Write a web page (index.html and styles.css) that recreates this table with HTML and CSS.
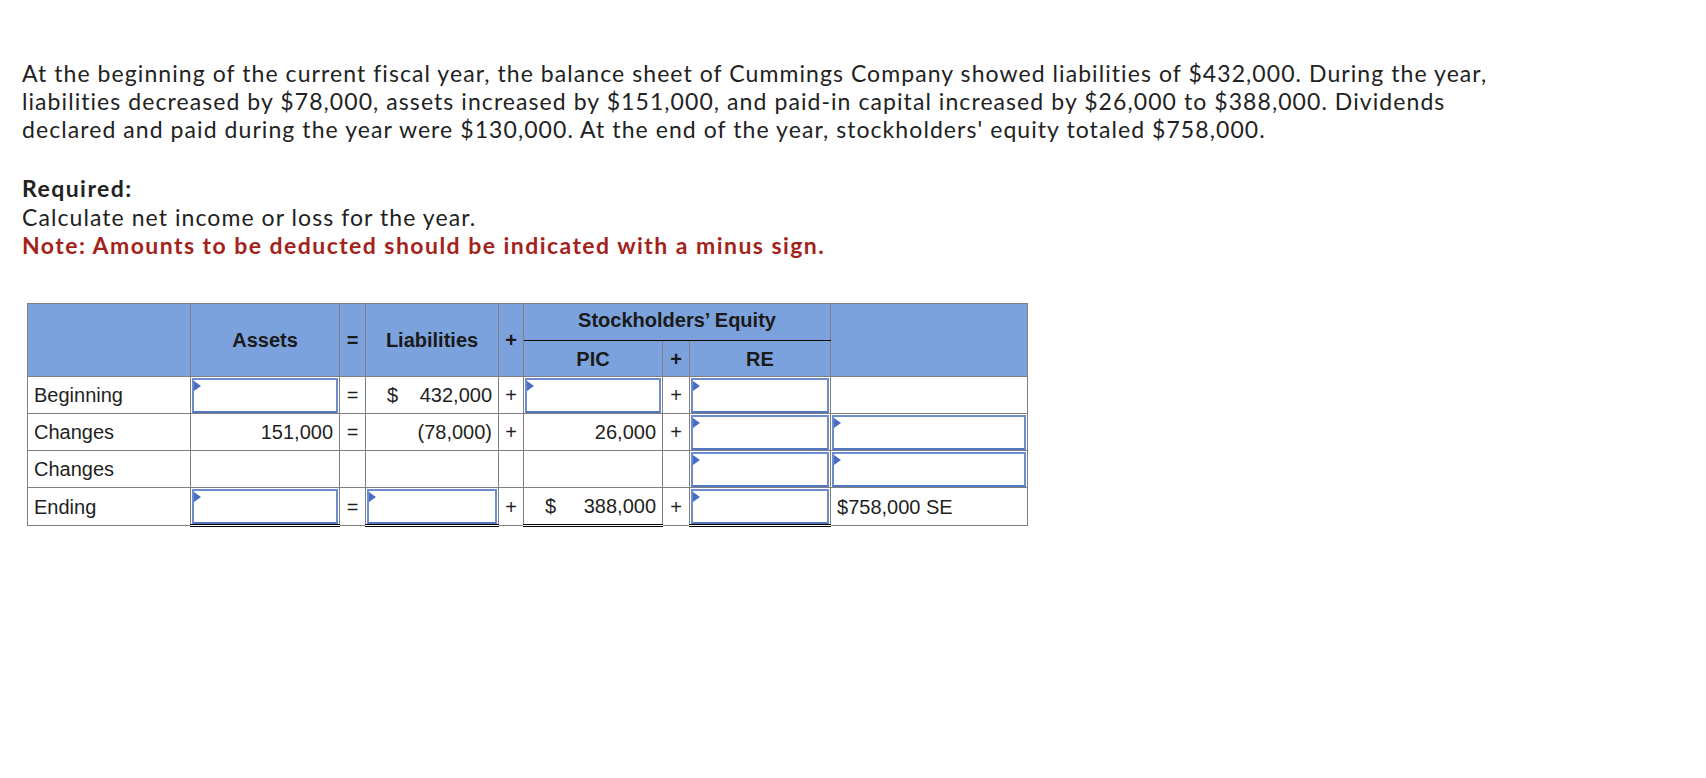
FILE: index.html
```html
<!DOCTYPE html>
<html lang="en">
<head>
<meta charset="utf-8">
<title>Cummings Company</title>
<link rel="stylesheet" href="styles.css">
</head>
<body>
<main class="page">
  <p class="intro">At the beginning of the current fiscal year, the balance sheet of Cummings Company showed liabilities of $432,000. During the year,<br>liabilities decreased by $78,000, assets increased by $151,000, and paid-in capital increased by $26,000 to $388,000. Dividends<br>declared and paid during the year were $130,000. At the end of the year, stockholders' equity totaled $758,000.</p>
  <div class="req">
    <div class="req-title">Required:</div>
    <div>Calculate net income or loss for the year.</div>
    <div class="note">Note: Amounts to be deducted should be indicated with a minus sign.</div>
  </div>
  <table class="eq">
    <colgroup>
      <col class="c-label"><col class="c-assets"><col class="c-op"><col class="c-liab"><col class="c-op2"><col class="c-pic"><col class="c-op3"><col class="c-re"><col class="c-last">
    </colgroup>
    <thead>
      <tr>
        <th rowspan="2"></th>
        <th rowspan="2">Assets</th>
        <th rowspan="2" class="op">=</th>
        <th rowspan="2">Liabilities</th>
        <th rowspan="2" class="op">+</th>
        <th colspan="3" class="se">Stockholders’ Equity</th>
        <th rowspan="2"></th>
      </tr>
      <tr>
        <th class="sub">PIC</th>
        <th class="sub op">+</th>
        <th class="sub">RE</th>
      </tr>
    </thead>
    <tbody>
      <tr>
        <td class="label">Beginning</td>
        <td class="in"><div class="field"></div></td>
        <td class="op">=</td>
        <td class="num"><span class="money"><span>$</span><span>432,000</span></span></td>
        <td class="op">+</td>
        <td class="in"><div class="field"></div></td>
        <td class="op">+</td>
        <td class="in"><div class="field"></div></td>
        <td></td>
      </tr>
      <tr>
        <td class="label">Changes</td>
        <td class="num">151,000</td>
        <td class="op">=</td>
        <td class="num">(78,000)</td>
        <td class="op">+</td>
        <td class="num">26,000</td>
        <td class="op">+</td>
        <td class="in"><div class="field"></div></td>
        <td class="in"><div class="field"></div></td>
      </tr>
      <tr>
        <td class="label">Changes</td>
        <td></td>
        <td></td>
        <td></td>
        <td></td>
        <td></td>
        <td></td>
        <td class="in"><div class="field"></div></td>
        <td class="in"><div class="field"></div></td>
      </tr>
      <tr class="total">
        <td class="label">Ending</td>
        <td class="in tot"><div class="field"></div></td>
        <td class="op">=</td>
        <td class="in tot"><div class="field"></div></td>
        <td class="op">+</td>
        <td class="num tot"><span class="money"><span>$</span><span>388,000</span></span></td>
        <td class="op">+</td>
        <td class="in tot"><div class="field"></div></td>
        <td class="label">$758,000 SE</td>
      </tr>
    </tbody>
  </table>
</main>
</body>
</html>
```

FILE: styles.css
```css
html, body {
  margin: 0;
  padding: 0;
  background: #ffffff;
}

.page {
  padding: 59px 0 0 22px;
  font-family: Lato, "Open Sans", sans-serif;
  font-size: 23px;
  line-height: 28px;
  letter-spacing: 1.07px;
  color: #222222;
}

.intro {
  margin: 0;
}

.req {
  margin-top: 31px;
  line-height: 28.7px;
}

.req-title {
  font-weight: 700;
  letter-spacing: 1.45px;
}

.note {
  font-weight: 700;
  letter-spacing: 1.45px;
  color: #a3231b;
}

.eq {
  margin: 43px 0 0 5px;
  border-collapse: collapse;
  table-layout: fixed;
  width: 1000px;
  font-family: "Liberation Sans", Arial, sans-serif;
  font-size: 20px;
  line-height: 22px;
  letter-spacing: 0;
  color: #1f1f1f;
}

.c-label { width: 163px; }
.c-assets { width: 149px; }
.c-op { width: 26px; }
.c-liab { width: 133px; }
.c-op2 { width: 25px; }
.c-pic { width: 139px; }
.c-op3 { width: 27px; }
.c-re { width: 141px; }
.c-last { width: 197px; }

.eq th,
.eq td {
  border: 1px solid #808080;
  padding: 0 6px;
  height: 36px;
  box-sizing: border-box;
}

.eq th {
  background: #7ba2dc;
  font-weight: 700;
  text-align: center;
  color: #1a1a1a;
}

.eq th.se {
  border-bottom: 1px solid #000000;
  height: 37px;
  padding-bottom: 4px;
}

.eq th.sub {
  border-top: 1px solid #000000;
}

.eq th.op,
.eq td.op {
  padding: 0;
  text-align: center;
}

.eq td.label {
  text-align: left;
}

.eq td.num {
  text-align: right;
}

.money {
  display: flex;
  justify-content: space-between;
  padding-left: 15px;
}

.eq td.in {
  padding: 1px 1px 0 1px;
}

.field {
  position: relative;
  height: 35px;
  box-sizing: border-box;
  border: 2px solid #6d8dd0;
  border-bottom-color: #5476bd;
  background: #ffffff;
}

.field::before {
  content: "";
  position: absolute;
  left: 0;
  top: 1px;
  border-style: solid;
  border-width: 5px 0 5px 7px;
  border-color: transparent transparent transparent #4a6ebf;
}

.total td.in,
.total td.num {
  border-top: 1px solid #000000;
}

.total td.tot {
  border-bottom: 3px double #000000;
}
```
